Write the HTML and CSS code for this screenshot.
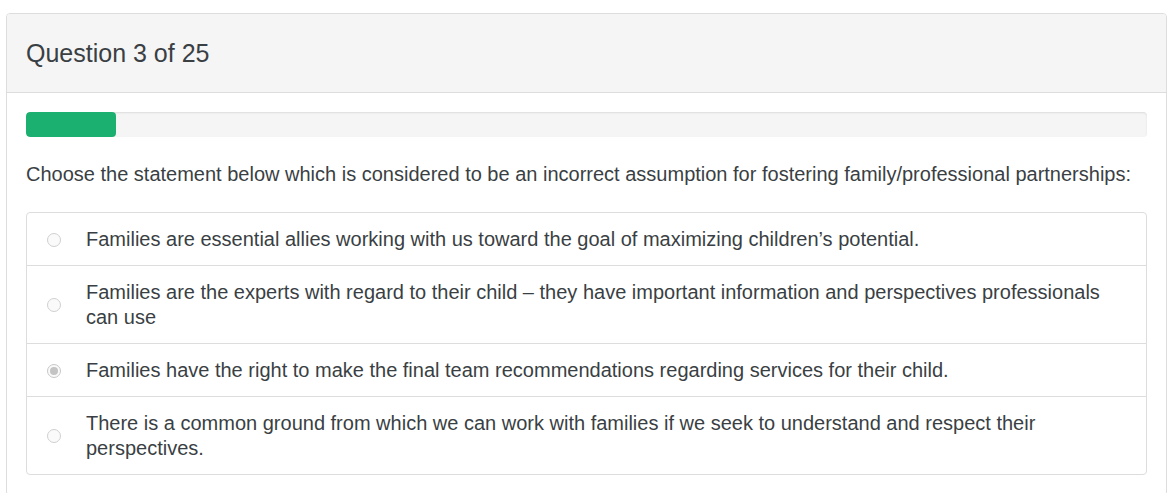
FILE: index.html
```html
<!DOCTYPE html>
<html>
<head>
<meta charset="utf-8">
<link rel="stylesheet" href="styles.css">
</head>
<body>
<div class="panel">
  <div class="panel-heading">Question 3 of 25</div>
  <div class="panel-body">
    <div class="progress"><div class="progress-bar" style="width: 8%"></div></div>
    <p class="question">Choose the statement below which is considered to be an incorrect assumption for fostering family/professional partnerships:</p>
    <ul class="answers">
      <li class="answer"><span class="radio"></span><span class="label">Families are essential allies working with us toward the goal of maximizing children’s potential.</span></li>
      <li class="answer"><span class="radio"></span><span class="label">Families are the experts with regard to their child – they have important information and perspectives professionals can use</span></li>
      <li class="answer"><span class="radio checked"></span><span class="label">Families have the right to make the final team recommendations regarding services for their child.</span></li>
      <li class="answer"><span class="radio"></span><span class="label">There is a common ground from which we can work with families if we seek to understand and respect their perspectives.</span></li>
    </ul>
  </div>
</div>
</body>
</html>
```
FILE: styles.css
```css
html, body {
  margin: 0;
  padding: 0;
  background: #fff;
}
body {
  font-family: "Liberation Sans", Arial, sans-serif;
  color: #333;
  padding: 13px 0 0 6px;
}
.panel {
  width: 1159px;
  border: 1px solid #ddd;
  border-radius: 4px;
  background: #fff;
}
.panel-heading {
  background: #f5f5f5;
  border-bottom: 1px solid #ddd;
  border-radius: 3px 3px 0 0;
  padding: 25px 19px 25px;
  font-size: 25px;
  line-height: 28px;
  color: #3a3f44;
}
.panel-body {
  padding: 19px 19px 20px;
}
.progress {
  height: 25px;
  background: #f5f5f5;
  border-radius: 4px;
  box-shadow: inset 0 1px 2px rgba(0,0,0,0.1);
  overflow: hidden;
}
.progress-bar {
  height: 100%;
  background: #1cb070;
  border-radius: 4px;
}
.question {
  margin: 25px 0 25px;
  font-size: 20px;
  line-height: 25px;
  color: #3a3f44;
}
.answers {
  list-style: none;
  margin: 0;
  padding: 0;
  border: 1px solid #ddd;
  border-radius: 4px;
}
.answer {
  display: flex;
  align-items: center;
  padding: 14px 20px 13px 20px;
  font-size: 20px;
  line-height: 25px;
  color: #3a3f44;
  border-top: 1px solid #ddd;
}
.answer:first-child {
  border-top: none;
}
.radio {
  flex: none;
  box-sizing: border-box;
  width: 14px;
  height: 14px;
  border: 1px solid #d0d0d0;
  border-radius: 50%;
  background: #fafafa;
  margin-right: 25px;
  position: relative;
}
.radio.checked {
  border-color: #c8c8c8;
}
.radio.checked::after {
  content: "";
  position: absolute;
  left: 2px;
  top: 2px;
  width: 8px;
  height: 8px;
  border-radius: 50%;
  background: #c4c4c4;
}
.label {
  flex: 1;
}
```
